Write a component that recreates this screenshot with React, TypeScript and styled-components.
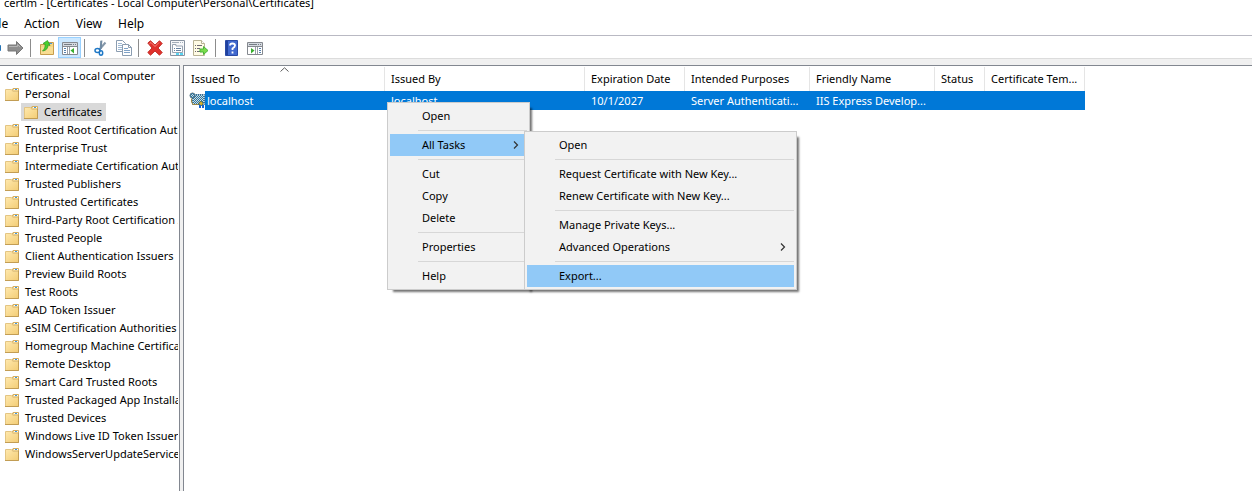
import React from "react";
import styled, { createGlobalStyle, css } from "styled-components";

const GlobalStyle = createGlobalStyle`
  *, *::before, *::after { box-sizing: border-box; }
  html, body, #root { height: 100%; }
  body {
    margin: 0;
    overflow: hidden;
    background: #ffffff;
    color: #000000;
    font: 11px/18px "Segoe UI", "Noto Sans", "Open Sans", sans-serif;
  }
  button { font: inherit; color: inherit; }
`;

const AppWindow = styled.div`
  display: flex;
  flex-direction: column;
  height: 100%;
`;

const TitleBar = styled.header`
  display: flex;
  align-items: flex-end;
  height: 12px;
  padding-left: 4px;
  overflow: hidden;
  white-space: nowrap;
`;

const Title = styled.h1`
  margin: 0;
  font-size: 11px;
  font-weight: 400;
  line-height: 18px;
`;

const MenuBar = styled.nav`
  display: flex;
  height: 23px;
  margin-left: -19px;
  font-size: 12px;
`;

const MenuBarButton = styled.button`
  padding: 0 8px;
  border: 0;
  background: none;
  line-height: 23px;
`;

const Toolbar = styled.div`
  display: flex;
  align-items: center;
  height: 24px;
  padding: 1px 0 0 4px;
  border-top: 1px solid #b9b9c3;
  border-bottom: 1px solid #dcdcdc;
`;

const ToolbarItems = styled.div`
  display: flex;
  align-items: center;
  margin-left: -23px;
`;

const ToolButton = styled.button<{ $pressed?: boolean }>`
  display: grid;
  place-items: center;
  width: 23px;
  height: 21px;
  padding: 1px 0 0;
  border: 1px solid ${(p) => (p.$pressed ? "#99d1ff" : "transparent")};
  background: ${(p) => (p.$pressed ? "#cce8ff" : "none")};
  svg { display: block; }
`;

const ToolSeparator = styled.span`
  width: 1px;
  height: 18px;
  margin: 0 4px 0 3px;
  background: #8c8c8c;
`;

const Workspace = styled.main`
  display: grid;
  grid-template-columns: 180px minmax(0, 1fr);
  column-gap: 3px;
  flex: 1;
  min-height: 0;
  padding-top: 6px;
  background: #f0f0f0;
`;

const TreePane = styled.section`
  padding-top: 1px;
  overflow: hidden;
  border-top: 1px solid #828790;
  border-right: 1px solid #828790;
  background: #ffffff;
`;

const TreeList = styled.ul`
  margin: 0;
  padding: 0 1px 0 0;
  list-style: none;
  li { overflow: hidden; }
`;

const TreeButton = styled.button<{ $level: number; $selected?: boolean }>`
  display: flex;
  align-items: center;
  gap: 6px;
  height: 18px;
  margin-left: ${(p) => [4, 2, 21][p.$level]}px;
  padding: 0 4px 0 ${(p) => (p.$level === 0 ? 2 : 3)}px;
  border: 0;
  background: ${(p) => (p.$selected ? "#d9d9d9" : "none")};
  line-height: 18px;
  white-space: nowrap;
  svg { flex: none; }
`;

const ListPane = styled.section`
  position: relative;
  padding-top: 1px;
  border-top: 1px solid #828790;
  border-left: 1px solid #828790;
  background: #ffffff;
`;

const CertTable = styled.table`
  width: 901px;
  table-layout: fixed;
  border-collapse: separate;
  border-spacing: 0;
`;

const HeaderCell = styled.th`
  height: 24px;
  padding: 0 0 0 6px;
  border-right: 1px solid #e5e5e5;
  font-weight: 400;
  text-align: left;
  white-space: nowrap;
  &:first-child { padding-left: 7px; }
`;

const HeaderLabel = styled.div`
  position: relative;
  svg {
    position: absolute;
    top: -3px;
    right: 7px;
    left: 0;
    margin: 0 auto;
  }
`;

const Cell = styled.td<{ $first?: boolean }>`
  height: 19px;
  padding: 0 0 0 ${(p) => (p.$first ? 5 : 6)}px;
  background: ${(p) => (p.$first ? "none" : "#0078d7")};
  color: #ffffff;
  line-height: 18px;
  white-space: nowrap;
`;

const NameCell = styled.div`
  display: flex;
  align-items: center;
  height: 19px;
`;

const NameText = styled.span`
  flex: 1;
  padding-left: 2px;
  background: #0078d7;
  line-height: 19px;
`;

const menuSurface = css`
  position: absolute;
  padding: 2px;
  border: 1px solid #cccccc;
  background: #f2f2f2;
  box-shadow: 4px 4px 2px -2px rgba(0, 0, 0, 0.55);
`;

const ContextMenu = styled.div`
  ${menuSurface}
  top: 36px;
  left: 203px;
  width: 143px;
`;

const SubMenu = styled.div`
  ${menuSurface}
  top: 28px;
  left: 136px;
  width: 273px;
`;

const MenuItem = styled.button<{ $active?: boolean }>`
  display: flex;
  align-items: center;
  justify-content: space-between;
  width: 100%;
  height: 22px;
  padding: 0 8px 0 32px;
  border: 0;
  background: ${(p) => (p.$active ? "#91c9f7" : "none")};
  text-align: left;
  white-space: nowrap;
`;

const MenuSeparator = styled.hr`
  height: 1px;
  margin: 3px 0 3px 28px;
  border: 0;
  background: #d7d7d7;
`;

const FolderIcon = () => (
  <svg width="14" height="13" viewBox="0 0 14 13">
    <defs>
      <linearGradient id="folder" x2="1" y2="1">
        <stop offset="0" stopColor="#ffe9ae" />
        <stop offset="1" stopColor="#f3cd76" />
      </linearGradient>
    </defs>
    <path d="M7 3L8 .5H13.500V12.500H7Z" fill="#eed08a" stroke="#d3ad61" />
    <path d="M9 1H13V2H9Z" fill="#fff" />
    <path d="M10 1H12V2H10Z" fill="#3f97e0" />
    <path d="M0 2H6.500L8 3.500H13V12.500H0Z" fill="url(#folder)" />
    <path d="M.5 12V1.500H6.500L8 3.500H13" fill="none" stroke="#e3c583" />
    <path d="M0 12.500H13.500V3" fill="none" stroke="#c29d54" />
  </svg>
);

const BackIcon = () => (
  <svg width="17" height="16" viewBox="0 0 17 16">
    <path d="M1 8L8 2V5.500H16.500V10.500H8V14Z" fill="#3f9be0" stroke="#2573b5" />
  </svg>
);

const ForwardIcon = () => (
  <svg width="17" height="16" viewBox="0 0 17 16">
    <path d="M16 8L9.500 1.500V5H1V11H9.500V14.500Z" fill="#8e8e8e" stroke="#777" />
    <path d="M2 6.500H10.500V4.500L13 7" fill="none" stroke="#b5b5b5" />
  </svg>
);

const UpFolderIcon = () => (
  <svg width="16" height="16" viewBox="0 0 16 16">
    <path d="M1.500 4.500H7L8.500 2.500H14.500V14.500H1.500Z" fill="#f3d583" stroke="#c79d4d" />
    <path d="M10 3H13V4H10Z" fill="#3f97e0" />
    <path d="M2 7H14V14H2Z" fill="#f8dd93" />
    <path d="M3.500 11C7.500 10.500 9 8 9 5L11 5.500L8.500 .5L4 3.500L6 4C6.500 7 5.500 9 3.500 11Z" fill="#4bd02c" stroke="#2a9a20" strokeWidth=".7" />
  </svg>
);

const PaneIcon = ({ right }: { right?: boolean }) => (
  <svg width="16" height="13" viewBox="0 0 16 13">
    <path d="M.5 .5H15.500V12.500H.5Z" fill="#fff" stroke="#85898f" />
    <path d="M1 1H15V4H1Z" fill="#d5dae0" />
    <path d="M1 4.500H15" stroke="#85898f" />
    <path d="M2 2.500H10M11 2.500H12M13 2.500H14" stroke="#777d85" />
    {right ? (
      <>
        <path d="M10.500 5V12M8.500 5V12" stroke="#9a9fa6" />
        <path d="M12 6.500H14M12 8.500H14M12 10.500H14" stroke="#5680ad" />
        <path d="M4 6L7.500 8.500L4 11.500Z" fill="#38ae2d" />
      </>
    ) : (
      <>
        <path d="M5.500 5V12M7.500 5V12" stroke="#9a9fa6" />
        <path d="M2 6.500H4M2 8.500H4M2 10.500H4" stroke="#5680ad" />
        <path d="M12 6L8.500 8.500L12 11.500Z" fill="#38ae2d" />
      </>
    )}
  </svg>
);

const CutIcon = () => (
  <svg width="13" height="16" viewBox="0 0 13 16">
    <path d="M7.500 .5L6.500 9M11.500 2.500L5 10" stroke="#8497a9" strokeWidth="2" />
    <path d="M7 1L7 9" stroke="#5f7f9c" />
    <ellipse cx="3.500" cy="10.500" rx="2.500" ry="2" fill="none" stroke="#1f78c6" strokeWidth="1.500" />
    <ellipse cx="7" cy="13" rx="1.700" ry="2.200" fill="none" stroke="#1f78c6" strokeWidth="1.500" />
  </svg>
);

const CopyIcon = () => (
  <svg width="16" height="16" viewBox="0 0 16 16">
    <path d="M.5 .5H6.500L9.500 3.500V11.500H.5Z" fill="#fff" stroke="#8b9db1" />
    <path d="M2 3.500H6M2 5.500H7M2 7.500H6M2 9.500H6" stroke="#9fb9d4" />
    <path d="M6.500 4.500H12.500L15.500 7.500V15.500H6.500Z" fill="#fff" stroke="#8b9db1" />
    <path d="M12.500 4.500V7.500H15.500" fill="none" stroke="#8b9db1" />
    <path d="M8 8.500H12M8 10.500H14M8 12.500H14" stroke="#7fa2c7" />
  </svg>
);

const DeleteIcon = () => (
  <svg width="16" height="16" viewBox="0 0 16 16">
    <path d="M.8 3L3.500 .8L8 5L12.500 .8L15.200 3.500L11 8L15.200 12.500L12.500 15.200L8 11L3.500 15.200L.8 12.500L5 8Z" fill="#e0302b" stroke="#c2312b" />
    <path d="M2.500 3.500L4 2.500L8 6.500L12 2.500" fill="none" stroke="#f58a80" />
  </svg>
);

const PropertiesIcon = () => (
  <svg width="15" height="16" viewBox="0 0 15 16">
    <path d="M.5 .5H14.500V15.500H.5Z" fill="#f7f8fa" stroke="#8893a1" />
    <path d="M2 2.500H9M10 2.500H11M12 2.500H13" stroke="#a5afba" />
    <path d="M2.500 4.500H6V6H12.500V12.500H2.500Z" fill="#fff" stroke="#98a4b2" />
    <path d="M4 8.500H5M6 8.500H11M4 10.500H5M6 10.500H11" stroke="#6681a0" />
    <path d="M6 14H9M10 14H13" stroke="#22c6ee" strokeWidth="1.500" />
  </svg>
);

const ExportIcon = () => (
  <svg width="17" height="16" viewBox="0 0 17 16">
    <path d="M1.500 .5H9.500L12.500 3.500V15.500H1.500Z" fill="#fffbe4" stroke="#b8b294" />
    <path d="M9.500 .5V3.500H12.500" fill="#fff" stroke="#b8b294" />
    <path d="M3 5.500H4M5 5.500H10M3 8.500H4M5 8.500H8M3 11.500H4M5 11.500H8" stroke="#6e6a73" />
    <path d="M8 9H11.500V6.500L16 10.500L11.500 14.500V12H8Z" fill="#7bdc4c" stroke="#4bb53a" />
  </svg>
);

const HelpIcon = () => (
  <svg width="13" height="16" viewBox="0 0 13 16">
    <path d="M.5 .5H12.500V15.500H.5Z" fill="#4169cf" stroke="#2a4aa5" />
    <path d="M1 1H3V15H1Z" fill="#1f419f" />
    <path d="M5 5.500Q5 3.500 7.300 3.500Q10 3.500 10 5.500Q10 7 7.500 8.500V10M7.500 11.500V13.500" fill="none" stroke="#fff" strokeWidth="1.800" />
  </svg>
);

const CertificateIcon = () => (
  <svg width="16" height="17" viewBox="0 0 16 17">
    <defs>
      <pattern id="dither" width="2" height="2" patternUnits="userSpaceOnUse">
        <path d="M0 0H2V2H0Z" fill="#e9dfbd" />
        <path d="M0 0H1V1H0ZM1 1H2V2H1Z" fill="#1173c4" />
      </pattern>
    </defs>
    <path d="M5 2.500H15.500V12.500H3.500V6Z" fill="url(#dither)" stroke="#4f6f7c" strokeDasharray="1 1" />
    <circle cx="3.500" cy="3.500" r="2.500" fill="url(#dither)" stroke="#4b6c76" />
    <path d="M2.500 6.500V10L4 12.500H9" fill="none" stroke="#a08a45" />
    <circle cx="12" cy="11.500" r="2" fill="#dcb52f" stroke="#56714f" />
    <path d="M10 13H12V16H10ZM13 13H15V16H13Z" fill="#1764d2" />
  </svg>
);

const SortIcon = () => (
  <svg width="9" height="5" viewBox="0 0 9 5">
    <path d="M.5 4.500L4.500 .8L8.500 4.500" fill="none" stroke="#5c5c5c" />
  </svg>
);

const ArrowIcon = () => (
  <svg width="6" height="8" viewBox="0 0 6 8">
    <path d="M1 .5L4.500 4L1 7.500" fill="none" stroke="#333" strokeWidth="1.200" />
  </svg>
);

const tree = [
  "Trusted Root Certification Authorities",
  "Enterprise Trust",
  "Intermediate Certification Authorities",
  "Trusted Publishers",
  "Untrusted Certificates",
  "Third-Party Root Certification Authorities",
  "Trusted People",
  "Client Authentication Issuers",
  "Preview Build Roots",
  "Test Roots",
  "AAD Token Issuer",
  "eSIM Certification Authorities",
  "Homegroup Machine Certificates",
  "Remote Desktop",
  "Smart Card Trusted Roots",
  "Trusted Packaged App Installation Authorities",
  "Trusted Devices",
  "Windows Live ID Token Issuer",
  "WindowsServerUpdateServices",
];

const columns = [
  { label: "Issued To", width: 201, value: "localhost" },
  { label: "Issued By", width: 200, value: "localhost" },
  { label: "Expiration Date", width: 100, value: "10/1/2027" },
  { label: "Intended Purposes", width: 125, value: "Server Authenticati..." },
  { label: "Friendly Name", width: 125, value: "IIS Express Develop..." },
  { label: "Status", width: 50, value: "" },
  { label: "Certificate Tem...", width: 100, value: "" },
];

export default function App() {
  return (
    <>
      <GlobalStyle />
      <AppWindow>
        <TitleBar>
          <Title>certlm - [Certificates - Local Computer\Personal\Certificates]</Title>
        </TitleBar>
        <MenuBar>
          {["File", "Action", "View", "Help"].map((label) => (
            <MenuBarButton key={label}>{label}</MenuBarButton>
          ))}
        </MenuBar>
        <Toolbar role="toolbar">
          <ToolbarItems>
            <ToolButton aria-label="Back"><BackIcon /></ToolButton>
            <ToolButton aria-label="Forward"><ForwardIcon /></ToolButton>
            <ToolSeparator />
            <ToolButton aria-label="Up one level"><UpFolderIcon /></ToolButton>
            <ToolButton aria-label="Show or hide console tree" $pressed><PaneIcon /></ToolButton>
            <ToolSeparator />
            <ToolButton aria-label="Cut"><CutIcon /></ToolButton>
            <ToolButton aria-label="Copy"><CopyIcon /></ToolButton>
            <ToolSeparator />
            <ToolButton aria-label="Delete"><DeleteIcon /></ToolButton>
            <ToolButton aria-label="Properties"><PropertiesIcon /></ToolButton>
            <ToolButton aria-label="Export list"><ExportIcon /></ToolButton>
            <ToolSeparator />
            <ToolButton aria-label="Help"><HelpIcon /></ToolButton>
            <ToolButton aria-label="Show or hide action pane"><PaneIcon right /></ToolButton>
          </ToolbarItems>
        </Toolbar>
        <Workspace>
          <TreePane>
            <TreeList>
              <li><TreeButton $level={0}>Certificates - Local Computer</TreeButton></li>
              <li><TreeButton $level={1}><FolderIcon />Personal</TreeButton></li>
              <li><TreeButton $level={2} $selected><FolderIcon />Certificates</TreeButton></li>
              {tree.map((label) => (
                <li key={label}><TreeButton $level={1}><FolderIcon />{label}</TreeButton></li>
              ))}
            </TreeList>
          </TreePane>
          <ListPane>
            <CertTable>
              <colgroup>
                {columns.map((c) => <col key={c.label} width={c.width} />)}
              </colgroup>
              <thead>
                <tr>
                  {columns.map((c, i) => (
                    <HeaderCell key={c.label} scope="col">
                      <HeaderLabel>{c.label}{i === 0 && <SortIcon />}</HeaderLabel>
                    </HeaderCell>
                  ))}
                </tr>
              </thead>
              <tbody>
                <tr>
                  {columns.map((c, i) => (
                    <Cell key={c.label} $first={i === 0}>
                      {i === 0 ? (
                        <NameCell><CertificateIcon /><NameText>{c.value}</NameText></NameCell>
                      ) : c.value}
                    </Cell>
                  ))}
                </tr>
              </tbody>
            </CertTable>
            <ContextMenu role="menu">
              <MenuItem role="menuitem">Open</MenuItem>
              <MenuSeparator />
              <MenuItem role="menuitem" $active>All Tasks<ArrowIcon /></MenuItem>
              <MenuSeparator />
              <MenuItem role="menuitem">Cut</MenuItem>
              <MenuItem role="menuitem">Copy</MenuItem>
              <MenuItem role="menuitem">Delete</MenuItem>
              <MenuSeparator />
              <MenuItem role="menuitem">Properties</MenuItem>
              <MenuSeparator />
              <MenuItem role="menuitem">Help</MenuItem>
              <SubMenu role="menu">
                <MenuItem role="menuitem">Open</MenuItem>
                <MenuSeparator />
                <MenuItem role="menuitem">Request Certificate with New Key...</MenuItem>
                <MenuItem role="menuitem">Renew Certificate with New Key...</MenuItem>
                <MenuSeparator />
                <MenuItem role="menuitem">Manage Private Keys...</MenuItem>
                <MenuItem role="menuitem">Advanced Operations<ArrowIcon /></MenuItem>
                <MenuSeparator />
                <MenuItem role="menuitem" $active>Export...</MenuItem>
              </SubMenu>
            </ContextMenu>
          </ListPane>
        </Workspace>
      </AppWindow>
    </>
  );
}
